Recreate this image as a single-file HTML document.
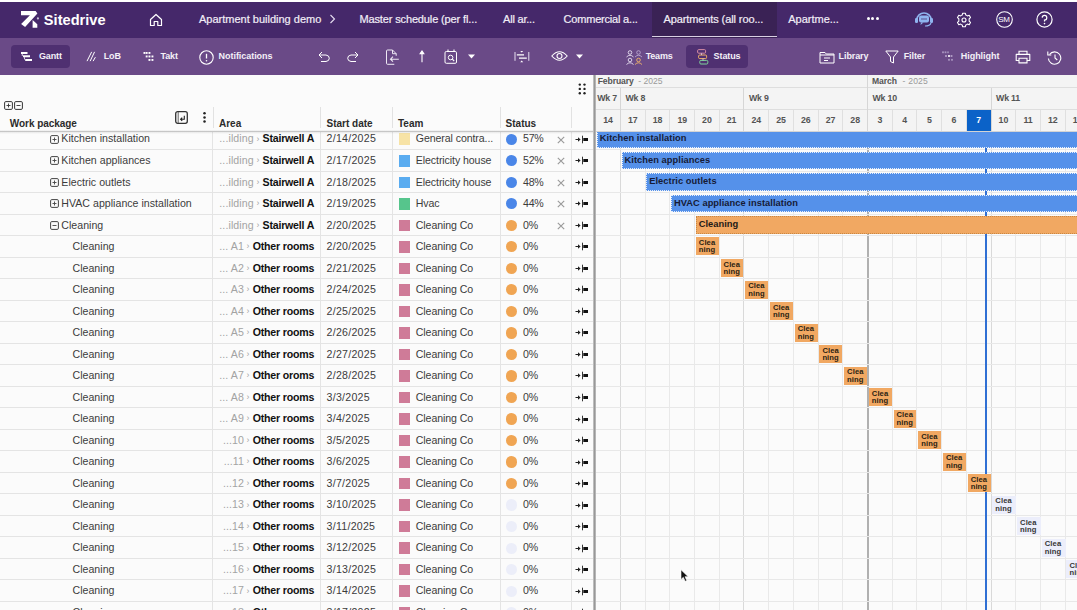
<!DOCTYPE html>
<html><head><meta charset="utf-8"><style>
html,body{margin:0;padding:0;width:1077px;height:610px;overflow:hidden;background:#fff}
body{position:relative;font-family:"Liberation Sans",sans-serif}
.t{position:absolute;white-space:nowrap}
.b{position:absolute;display:block}
.bar{position:absolute;box-sizing:border-box;border:1px dotted rgba(255,255,255,0.85);border-right:none;font-weight:700;font-size:9.3px;line-height:15.72px;padding-left:2px;white-space:nowrap;overflow:hidden;letter-spacing:0.05px}
.sb{position:absolute;box-sizing:border-box;font-weight:700;font-size:7.6px;line-height:7.4px;padding:1.6px 0 0 3px;white-space:nowrap;overflow:hidden;letter-spacing:0.1px}
</style></head><body>
<div class="b" style="left:0.00px;top:0.00px;width:1077.00px;height:2.00px;background:#fff"></div>
<div class="b" style="left:0.00px;top:2.00px;width:1077.00px;height:35.50px;background:#45286a"></div>
<div class="b" style="left:652.00px;top:2.00px;width:125.00px;height:35.50px;background:#3a2255"></div>
<div class="b" style="left:652.00px;top:35.60px;width:125.00px;height:1.60px;background:#d9d0e3"></div>
<svg class="b" style="left:20.00px;top:10.00px;" width="20" height="19" viewBox="0 0 20 19"><path d="M1 1.1H15.6L17.4 3.4L5.1 16.9L1.1 13.9L9.9 5.2H1Z" fill="#fff"/><path d="M12.6 9.9L17.3 14.2V17.8H12.6Z" fill="#fff"/><circle cx="17.9" cy="8.4" r="1.1" fill="#c9bfd8"/></svg>
<div class="t" style="left:43.80px;top:12.94px;font-size:14.6px;line-height:14.6px;color:#fff;font-weight:700;letter-spacing:0.02px">Sitedrive</div>
<svg class="b" style="left:149.00px;top:12.50px;" width="14" height="14" viewBox="0 0 14 14"><path d="M1.5 6.5L7 1.5L12.5 6.5V12.5H8.8V8.5H5.2V12.5H1.5Z" fill="none" stroke="#fff" stroke-width="1.2" stroke-linejoin="round"/></svg>
<div class="t" style="left:199.00px;top:13.89px;font-size:11px;line-height:11px;color:#f2eef7;-webkit-text-stroke:0.2px #f2eef7;font-weight:400;">Apartment building demo</div>
<svg class="b" style="left:329.00px;top:14.00px;" width="7" height="10" viewBox="0 0 7 10"><path d="M1.5 1L5.5 5L1.5 9" fill="none" stroke="#e6def0" stroke-width="1.1"/></svg>
<div class="t" style="left:359.40px;top:13.89px;font-size:11px;line-height:11px;color:#f2eef7;-webkit-text-stroke:0.2px #f2eef7;font-weight:400;letter-spacing:-0.13px">Master schedule (per fl...</div>
<div class="t" style="left:503.00px;top:13.89px;font-size:11px;line-height:11px;color:#f2eef7;-webkit-text-stroke:0.2px #f2eef7;font-weight:400;letter-spacing:-0.2px">All ar...</div>
<div class="t" style="left:563.60px;top:13.89px;font-size:11px;line-height:11px;color:#f2eef7;-webkit-text-stroke:0.2px #f2eef7;font-weight:400;letter-spacing:-0.2px">Commercial a...</div>
<div class="t" style="left:663.40px;top:13.89px;font-size:11px;line-height:11px;color:#f2eef7;-webkit-text-stroke:0.2px #f2eef7;font-weight:400;letter-spacing:-0.1px">Apartments (all roo...</div>
<div class="t" style="left:788.20px;top:13.89px;font-size:11px;line-height:11px;color:#f2eef7;-webkit-text-stroke:0.2px #f2eef7;font-weight:400;">Apartme...</div>
<div class="b" style="left:866.50px;top:17.30px;width:3.20px;height:3.20px;background:#fff;border-radius:50%"></div>
<div class="b" style="left:871.10px;top:17.30px;width:3.20px;height:3.20px;background:#fff;border-radius:50%"></div>
<div class="b" style="left:875.70px;top:17.30px;width:3.20px;height:3.20px;background:#fff;border-radius:50%"></div>
<svg class="b" style="left:914.00px;top:11.00px;" width="20" height="16" viewBox="0 0 20 16"><path d="M3 8.5A7 6.5 0 0 1 17 8.5" fill="none" stroke="#8fb4ef" stroke-width="1.6"/><rect x="1" y="7" width="3" height="5" rx="1.2" fill="#8fb4ef"/><rect x="16" y="7" width="3" height="5" rx="1.2" fill="#8fb4ef"/><rect x="5" y="4.5" width="10" height="7" rx="2" fill="#8fb4ef"/><path d="M7 11.5L6.5 14L9.5 11.5Z" fill="#8fb4ef"/><circle cx="8" cy="8" r="0.7" fill="#472a6b"/><circle cx="10" cy="8" r="0.7" fill="#472a6b"/><circle cx="12" cy="8" r="0.7" fill="#472a6b"/><path d="M17 12Q16 15 11 15" fill="none" stroke="#8fb4ef" stroke-width="1.2"/></svg>
<svg class="b" style="left:956.00px;top:11.50px;" width="16" height="16" viewBox="0 0 16 16"><g transform="translate(8 8)" fill="none" stroke="#fff" stroke-width="1.1"><path d="M-1.3 -6.8H1.3L1.8 -5A5 5 0 0 1 3.4 -4.1L5.2 -4.7L6.5 -2.4L5.1 -1.1A5 5 0 0 1 5.1 1.1L6.5 2.4L5.2 4.7L3.4 4.1A5 5 0 0 1 1.8 5L1.3 6.8H-1.3L-1.8 5A5 5 0 0 1 -3.4 4.1L-5.2 4.7L-6.5 2.4L-5.1 1.1A5 5 0 0 1 -5.1 -1.1L-6.5 -2.4L-5.2 -4.7L-3.4 -4.1A5 5 0 0 1 -1.8 -5Z" stroke-linejoin="round"/><circle r="2"/></g></svg>
<svg class="b" style="left:995.50px;top:11.00px;" width="17" height="17" viewBox="0 0 17 17"><circle cx="8.5" cy="8.5" r="7.8" fill="none" stroke="#fff" stroke-width="1.1"/></svg>
<div class="t" style="left:954.00px;width:100px;text-align:center;top:15.73px;font-size:8px;line-height:8px;color:#fff;font-weight:400;letter-spacing:-0.3px">SM</div>
<svg class="b" style="left:1036.00px;top:11.00px;" width="17" height="17" viewBox="0 0 17 17"><circle cx="8.5" cy="8.5" r="7.6" fill="none" stroke="#fff" stroke-width="1.2"/><path d="M6.2 6.6A2.3 2.3 0 1 1 8.5 9V10.6" fill="none" stroke="#fff" stroke-width="1.2"/><circle cx="8.5" cy="12.6" r="0.8" fill="#fff"/></svg>
<div class="b" style="left:0.00px;top:37.50px;width:1077.00px;height:37.00px;background:#6a4a87"></div>
<div class="b" style="left:10.80px;top:44.70px;width:59.20px;height:23.00px;background:#4f3071;border-radius:4px"></div>
<div class="b" style="left:686.00px;top:45.00px;width:62.00px;height:22.70px;background:#4f3071;border-radius:4px"></div>
<svg class="b" style="left:20.00px;top:51.00px;" width="13" height="11" viewBox="0 0 13 11"><path d="M1 2H7.5M3 5.2H10M5.2 8.9H12" stroke="#fff" stroke-width="2"/><path d="M2.3 3V5M4.5 6.2V8.5" stroke="#fff" stroke-width="0.8"/></svg>
<div class="t" style="left:39.00px;top:51.98px;font-size:9px;line-height:9px;color:#f4f0f8;font-weight:700;letter-spacing:-0.15px">Gantt</div>
<svg class="b" style="left:86.00px;top:51.00px;" width="11" height="11" viewBox="0 0 11 11"><path d="M5.5 1.2L1.2 9.8M8.4 1.2L4.3 9.8M9.2 6.5L7.3 9.8" stroke="#fff" stroke-width="1" stroke-linecap="round"/></svg>
<div class="t" style="left:103.70px;top:51.98px;font-size:9px;line-height:9px;color:#f4f0f8;font-weight:700;letter-spacing:-0.15px">LoB</div>
<svg class="b" style="left:141.50px;top:51.00px;" width="12" height="11" viewBox="0 0 12 11"><rect x="1.5" y="1" width="1.9" height="1.9" fill="#fff"/><rect x="3.7" y="1" width="1.9" height="1.9" fill="#fff"/><rect x="6.5" y="1" width="1.9" height="1.9" fill="#fff"/><rect x="3.7" y="4.5" width="1.9" height="1.9" fill="#fff"/><rect x="6.5" y="4.5" width="1.9" height="1.9" fill="#fff"/><rect x="9.5" y="4.5" width="1.9" height="1.9" fill="#fff"/><rect x="6.5" y="8" width="1.9" height="1.9" fill="#fff"/><rect x="9.5" y="8" width="1.9" height="1.9" fill="#fff"/></svg>
<div class="t" style="left:160.50px;top:51.98px;font-size:9px;line-height:9px;color:#f4f0f8;font-weight:700;letter-spacing:-0.15px">Takt</div>
<svg class="b" style="left:198.50px;top:49.50px;" width="15" height="15" viewBox="0 0 15 15"><circle cx="7.5" cy="7.5" r="6.7" fill="none" stroke="#fff" stroke-width="1.1"/><path d="M7.5 3.8V8.5" stroke="#fff" stroke-width="1.3"/><circle cx="7.5" cy="10.8" r="0.8" fill="#fff"/></svg>
<div class="t" style="left:218.60px;top:51.98px;font-size:9px;line-height:9px;color:#f4f0f8;font-weight:700;letter-spacing:-0.05px">Notifications</div>
<svg class="b" style="left:317.50px;top:51.00px;" width="13" height="11" viewBox="0 0 13 11"><path d="M4 1L1 4L4 7M1 4H8A4 3.3 0 0 1 8 10.5H3" fill="none" stroke="#fff" stroke-width="1"/></svg>
<svg class="b" style="left:345.50px;top:51.00px;" width="13" height="11" viewBox="0 0 13 11"><path d="M9 1L12 4L9 7M12 4H5A4 3.3 0 0 0 5 10.5H10" fill="none" stroke="#fff" stroke-width="1"/></svg>
<svg class="b" style="left:385.00px;top:48.50px;" width="15" height="16" viewBox="0 0 15 16"><path d="M7.5 1H2.5A1 1 0 0 0 1.5 2V14.3A1 1 0 0 0 2.5 15.3H9.3M7.5 1L11.2 4.7V6.8M7.5 1V4.7H11.2" fill="none" stroke="#eee8f4" stroke-width="1"/><path d="M13.8 10.2H5.5M8 7.7L5.5 10.2L8 12.7" fill="none" stroke="#eee8f4" stroke-width="1.1"/></svg>
<svg class="b" style="left:418.80px;top:50.00px;" width="6" height="13" viewBox="0 0 6 13"><path d="M3 12.3V3M1.2 3.6L3 1L4.8 3.6Z" stroke="#fff" stroke-width="1.1" fill="#fff"/></svg>
<svg class="b" style="left:443.50px;top:49.00px;" width="14" height="16" viewBox="0 0 14 16"><rect x="1" y="2.5" width="11.5" height="11.8" rx="1.3" fill="none" stroke="#fff" stroke-width="1"/><path d="M4 0.5V3M10 0.5V3" stroke="#fff" stroke-width="1.1"/><circle cx="6.6" cy="8.5" r="2.3" fill="none" stroke="#fff" stroke-width="1"/><path d="M8.3 10.2L10.2 12" stroke="#fff" stroke-width="1.1"/></svg>
<svg class="b" style="left:467.50px;top:54.00px;" width="7" height="5" viewBox="0 0 7 5"><path d="M0 0.5H7L3.5 4.5Z" fill="#fff"/></svg>
<svg class="b" style="left:512.50px;top:49.50px;" width="17" height="14" viewBox="0 0 17 14"><path d="M2 2V10.8M15.8 2V10.8" stroke="#e6def0" stroke-width="1"/><path d="M3.8 4.9H11M6 8.1H13.8" stroke="#fff" stroke-width="1.3"/><path d="M7.2 1H10.2L8.7 2.6Z M7.2 12.2H10.2L8.7 10.6Z" fill="#fff"/></svg>
<svg class="b" style="left:550.80px;top:50.00px;" width="17" height="12" viewBox="0 0 17 12"><path d="M0.8 6Q8.5 -2.5 16.2 6Q8.5 14.5 0.8 6Z" fill="none" stroke="#fff" stroke-width="1.1"/><circle cx="8.5" cy="6" r="2.5" fill="none" stroke="#fff" stroke-width="1.1"/></svg>
<svg class="b" style="left:576.00px;top:54.00px;" width="7" height="5" viewBox="0 0 7 5"><path d="M0 0.5H7L3.5 4.5Z" fill="#fff"/></svg>
<svg class="b" style="left:625.50px;top:49.50px;" width="17" height="16" viewBox="0 0 17 16"><g fill="none" stroke-width="0.9"><circle cx="4" cy="2.5" r="1.8" stroke="#e8e0f0"/><path d="M0.5 7Q4 3.5 7.5 7" stroke="#e8e0f0"/><circle cx="12.5" cy="2.5" r="1.8" stroke="#b9a6cf"/><path d="M9 7Q12.5 3.5 16 7" stroke="#b9a6cf"/><circle cx="4" cy="10" r="1.8" stroke="#e8e0f0"/><path d="M0.5 14.5Q4 11 7.5 14.5" stroke="#e8e0f0"/><circle cx="12.5" cy="10" r="1.8" stroke="#f1b46a"/><path d="M9 14.5Q12.5 11 16 14.5" stroke="#f1b46a"/></g></svg>
<div class="t" style="left:645.70px;top:51.98px;font-size:9px;line-height:9px;color:#f4f0f8;font-weight:700;letter-spacing:-0.2px">Teams</div>
<svg class="b" style="left:697.00px;top:49.00px;" width="12" height="16" viewBox="0 0 12 16"><rect x="0.6" y="0.6" width="8" height="3.6" rx="1.1" fill="none" stroke="#d58ca4" stroke-width="1"/><rect x="1.6" y="6" width="8" height="3.6" rx="1.1" fill="none" stroke="#f1b46a" stroke-width="1"/><rect x="2.8" y="11.4" width="8" height="3.6" rx="1.1" fill="none" stroke="#7fd39b" stroke-width="1"/><path d="M4.5 4.2V6M6 9.6V11.4" stroke="#d9cfe6" stroke-width="0.8"/></svg>
<div class="t" style="left:713.60px;top:51.98px;font-size:9px;line-height:9px;color:#f4f0f8;font-weight:700;letter-spacing:-0.1px">Status</div>
<svg class="b" style="left:818.50px;top:50.50px;" width="16" height="13" viewBox="0 0 16 13"><path d="M1 1.5H6L7.3 3H15V12H1Z" fill="none" stroke="#fff" stroke-width="1"/><path d="M1 4H15" stroke="#fff" stroke-width="1"/><path d="M5 7H11M5 9.5H9" stroke="#fff" stroke-width="1"/></svg>
<div class="t" style="left:838.60px;top:51.98px;font-size:9px;line-height:9px;color:#f4f0f8;font-weight:700;letter-spacing:-0.1px">Library</div>
<svg class="b" style="left:884.50px;top:49.80px;" width="14" height="14" viewBox="0 0 14 14"><path d="M0.8 1H13.2L8.5 7V13L5.5 11.5V7Z" fill="none" stroke="#fff" stroke-width="1" stroke-linejoin="round"/></svg>
<div class="t" style="left:903.70px;top:51.98px;font-size:9px;line-height:9px;color:#f4f0f8;font-weight:700;letter-spacing:-0.1px">Filter</div>
<svg class="b" style="left:942.00px;top:51.00px;" width="12" height="11" viewBox="0 0 12 11"><rect x="0.09999999999999998" y="0.4" width="1.8" height="1.8" fill="#a995c0"/><rect x="2.6" y="0.4" width="1.8" height="1.8" fill="#a995c0"/><rect x="5.1" y="0.4" width="1.8" height="1.8" fill="#9d88b6"/><rect x="3.1" y="4.1" width="1.8" height="1.8" fill="#b5a3c9"/><rect x="6.1" y="4.1" width="1.8" height="1.8" fill="#ffffff"/><rect x="8.6" y="4.1" width="1.8" height="1.8" fill="#b5a3c9"/><rect x="6.1" y="7.9" width="1.8" height="1.8" fill="#a995c0"/><rect x="9.1" y="7.9" width="1.8" height="1.8" fill="#a995c0"/></svg>
<div class="t" style="left:960.80px;top:51.98px;font-size:9px;line-height:9px;color:#f4f0f8;font-weight:700;letter-spacing:-0.05px">Highlight</div>
<svg class="b" style="left:1015.00px;top:50.00px;" width="16" height="14" viewBox="0 0 16 14"><path d="M4 4.2V1.2H12V4.2" fill="none" stroke="#fff" stroke-width="1.1"/><path d="M4 10.5H1.2V4.4H14.8V10.5H12" fill="none" stroke="#fff" stroke-width="1.1" stroke-linejoin="round"/><path d="M4 8.3V12.9H12V8.3Z" fill="none" stroke="#fff" stroke-width="1.1"/></svg>
<svg class="b" style="left:1047.00px;top:49.50px;" width="15" height="15" viewBox="0 0 15 15"><path d="M2.5 4.5A6.2 6.2 0 1 1 1.4 8.5" fill="none" stroke="#fff" stroke-width="1.1"/><path d="M0.8 1.5V5H4.3" fill="none" stroke="#fff" stroke-width="1.1"/><path d="M8 4.5V8L10.3 10" fill="none" stroke="#fff" stroke-width="1.1"/></svg>
<div class="b" style="left:0.00px;top:74.50px;width:1077.00px;height:535.50px;background:#fbfbfb"></div>
<div class="b" style="left:619.91px;top:130.50px;width:1.00px;height:479.50px;background:#d9d9d9"></div>
<div class="b" style="left:644.62px;top:130.50px;width:1.00px;height:479.50px;background:#e9e9e9"></div>
<div class="b" style="left:669.33px;top:130.50px;width:1.00px;height:479.50px;background:#e9e9e9"></div>
<div class="b" style="left:694.04px;top:130.50px;width:1.00px;height:479.50px;background:#e9e9e9"></div>
<div class="b" style="left:718.75px;top:130.50px;width:1.00px;height:479.50px;background:#e9e9e9"></div>
<div class="b" style="left:743.46px;top:130.50px;width:1.00px;height:479.50px;background:#d9d9d9"></div>
<div class="b" style="left:768.17px;top:130.50px;width:1.00px;height:479.50px;background:#e9e9e9"></div>
<div class="b" style="left:792.88px;top:130.50px;width:1.00px;height:479.50px;background:#e9e9e9"></div>
<div class="b" style="left:817.59px;top:130.50px;width:1.00px;height:479.50px;background:#e9e9e9"></div>
<div class="b" style="left:842.30px;top:130.50px;width:1.00px;height:479.50px;background:#e9e9e9"></div>
<div class="b" style="left:866.51px;top:130.50px;width:2.00px;height:479.50px;background:#b0b0b0"></div>
<div class="b" style="left:891.72px;top:130.50px;width:1.00px;height:479.50px;background:#e9e9e9"></div>
<div class="b" style="left:916.43px;top:130.50px;width:1.00px;height:479.50px;background:#e9e9e9"></div>
<div class="b" style="left:941.14px;top:130.50px;width:1.00px;height:479.50px;background:#e9e9e9"></div>
<div class="b" style="left:965.85px;top:130.50px;width:1.00px;height:479.50px;background:#e9e9e9"></div>
<div class="b" style="left:990.56px;top:130.50px;width:1.00px;height:479.50px;background:#d9d9d9"></div>
<div class="b" style="left:1015.27px;top:130.50px;width:1.00px;height:479.50px;background:#e9e9e9"></div>
<div class="b" style="left:1039.98px;top:130.50px;width:1.00px;height:479.50px;background:#e9e9e9"></div>
<div class="b" style="left:1064.69px;top:130.50px;width:1.00px;height:479.50px;background:#e9e9e9"></div>
<div class="b" style="left:1089.40px;top:130.50px;width:1.00px;height:479.50px;background:#e9e9e9"></div>
<div class="b" style="left:595.70px;top:149.00px;width:481.30px;height:1.00px;background:#e8e8e8"></div>
<div class="b" style="left:595.70px;top:170.52px;width:481.30px;height:1.00px;background:#e8e8e8"></div>
<div class="b" style="left:595.70px;top:192.04px;width:481.30px;height:1.00px;background:#e8e8e8"></div>
<div class="b" style="left:595.70px;top:213.56px;width:481.30px;height:1.00px;background:#e8e8e8"></div>
<div class="b" style="left:595.70px;top:235.08px;width:481.30px;height:1.00px;background:#e8e8e8"></div>
<div class="b" style="left:595.70px;top:256.60px;width:481.30px;height:1.00px;background:#e8e8e8"></div>
<div class="b" style="left:595.70px;top:278.12px;width:481.30px;height:1.00px;background:#e8e8e8"></div>
<div class="b" style="left:595.70px;top:299.64px;width:481.30px;height:1.00px;background:#e8e8e8"></div>
<div class="b" style="left:595.70px;top:321.16px;width:481.30px;height:1.00px;background:#e8e8e8"></div>
<div class="b" style="left:595.70px;top:342.68px;width:481.30px;height:1.00px;background:#e8e8e8"></div>
<div class="b" style="left:595.70px;top:364.20px;width:481.30px;height:1.00px;background:#e8e8e8"></div>
<div class="b" style="left:595.70px;top:385.72px;width:481.30px;height:1.00px;background:#e8e8e8"></div>
<div class="b" style="left:595.70px;top:407.24px;width:481.30px;height:1.00px;background:#e8e8e8"></div>
<div class="b" style="left:595.70px;top:428.76px;width:481.30px;height:1.00px;background:#e8e8e8"></div>
<div class="b" style="left:595.70px;top:450.28px;width:481.30px;height:1.00px;background:#e8e8e8"></div>
<div class="b" style="left:595.70px;top:471.80px;width:481.30px;height:1.00px;background:#e8e8e8"></div>
<div class="b" style="left:595.70px;top:493.32px;width:481.30px;height:1.00px;background:#e8e8e8"></div>
<div class="b" style="left:595.70px;top:514.84px;width:481.30px;height:1.00px;background:#e8e8e8"></div>
<div class="b" style="left:595.70px;top:536.36px;width:481.30px;height:1.00px;background:#e8e8e8"></div>
<div class="b" style="left:595.70px;top:557.88px;width:481.30px;height:1.00px;background:#e8e8e8"></div>
<div class="b" style="left:595.70px;top:579.40px;width:481.30px;height:1.00px;background:#e8e8e8"></div>
<div class="b" style="left:595.70px;top:600.92px;width:481.30px;height:1.00px;background:#e8e8e8"></div>
<div class="b" style="left:985.45px;top:130.50px;width:2.00px;height:479.50px;background:#3070d4"></div>
<div class="bar" style="left:596.80px;top:130.28px;width:490.20px;height:17.62px;background:#5591ea;color:#161b36;border-color:rgba(255,255,255,0.85)">Kitchen installation</div>
<div class="bar" style="left:621.51px;top:151.80px;width:465.49px;height:17.62px;background:#5591ea;color:#161b36;border-color:rgba(255,255,255,0.85)">Kitchen appliances</div>
<div class="bar" style="left:646.22px;top:173.32px;width:440.78px;height:17.62px;background:#5591ea;color:#161b36;border-color:rgba(255,255,255,0.85)">Electric outlets</div>
<div class="bar" style="left:670.93px;top:194.84px;width:416.07px;height:17.62px;background:#5591ea;color:#161b36;border-color:rgba(255,255,255,0.85)">HVAC appliance installation</div>
<div class="bar" style="left:695.64px;top:216.36px;width:391.36px;height:17.62px;background:#f1a862;color:#1e1a16;border-color:#c98743">Cleaning</div>
<div class="sb" style="left:695.84px;top:237.48px;width:22.91px;height:18.02px;background:#f1a862;color:#2a1e12">Clea<br>ning</div>
<div class="sb" style="left:720.55px;top:259.00px;width:22.91px;height:18.02px;background:#f1a862;color:#2a1e12">Clea<br>ning</div>
<div class="sb" style="left:745.26px;top:280.52px;width:22.91px;height:18.02px;background:#f1a862;color:#2a1e12">Clea<br>ning</div>
<div class="sb" style="left:769.97px;top:302.04px;width:22.91px;height:18.02px;background:#f1a862;color:#2a1e12">Clea<br>ning</div>
<div class="sb" style="left:794.68px;top:323.56px;width:22.91px;height:18.02px;background:#f1a862;color:#2a1e12">Clea<br>ning</div>
<div class="sb" style="left:819.39px;top:345.08px;width:22.91px;height:18.02px;background:#f1a862;color:#2a1e12">Clea<br>ning</div>
<div class="sb" style="left:844.10px;top:366.60px;width:22.91px;height:18.02px;background:#f1a862;color:#2a1e12">Clea<br>ning</div>
<div class="sb" style="left:868.81px;top:388.12px;width:22.91px;height:18.02px;background:#f1a862;color:#2a1e12">Clea<br>ning</div>
<div class="sb" style="left:893.52px;top:409.64px;width:22.91px;height:18.02px;background:#f1a862;color:#2a1e12">Clea<br>ning</div>
<div class="sb" style="left:918.23px;top:431.16px;width:22.91px;height:18.02px;background:#f1a862;color:#2a1e12">Clea<br>ning</div>
<div class="sb" style="left:942.94px;top:452.68px;width:22.91px;height:18.02px;background:#f1a862;color:#2a1e12">Clea<br>ning</div>
<div class="sb" style="left:967.65px;top:474.20px;width:22.91px;height:18.02px;background:#f1a862;color:#2a1e12">Clea<br>ning</div>
<div class="sb" style="left:992.36px;top:495.72px;width:23.81px;height:18.02px;background:#eceefb;color:#363636">Clea<br>ning</div>
<div class="sb" style="left:1017.07px;top:517.24px;width:23.81px;height:18.02px;background:#eceefb;color:#363636">Clea<br>ning</div>
<div class="sb" style="left:1041.78px;top:538.76px;width:23.81px;height:18.02px;background:#eceefb;color:#363636">Clea<br>ning</div>
<div class="sb" style="left:1066.49px;top:560.28px;width:23.81px;height:18.02px;background:#eceefb;color:#363636">Clea<br>ning</div>
<div class="b" style="left:595.70px;top:74.50px;width:481.30px;height:57.10px;background:#f4f4f4"></div>
<div class="b" style="left:595.70px;top:87.30px;width:481.30px;height:1.00px;background:#dedede"></div>
<div class="b" style="left:595.70px;top:108.90px;width:481.30px;height:1.00px;background:#dedede"></div>
<div class="b" style="left:595.70px;top:131.00px;width:481.30px;height:1.00px;background:#d4d4d4"></div>
<div class="b" style="left:619.91px;top:88.30px;width:1.00px;height:42.70px;background:#d6d6d6"></div>
<div class="b" style="left:644.62px;top:109.90px;width:1.00px;height:21.10px;background:#e0e0e0"></div>
<div class="b" style="left:669.33px;top:109.90px;width:1.00px;height:21.10px;background:#e0e0e0"></div>
<div class="b" style="left:694.04px;top:109.90px;width:1.00px;height:21.10px;background:#e0e0e0"></div>
<div class="b" style="left:718.75px;top:109.90px;width:1.00px;height:21.10px;background:#e0e0e0"></div>
<div class="b" style="left:743.46px;top:88.30px;width:1.00px;height:42.70px;background:#d6d6d6"></div>
<div class="b" style="left:768.17px;top:109.90px;width:1.00px;height:21.10px;background:#e0e0e0"></div>
<div class="b" style="left:792.88px;top:109.90px;width:1.00px;height:21.10px;background:#e0e0e0"></div>
<div class="b" style="left:817.59px;top:109.90px;width:1.00px;height:21.10px;background:#e0e0e0"></div>
<div class="b" style="left:842.30px;top:109.90px;width:1.00px;height:21.10px;background:#e0e0e0"></div>
<div class="b" style="left:867.01px;top:74.50px;width:1.00px;height:56.50px;background:#d6d6d6"></div>
<div class="b" style="left:891.72px;top:109.90px;width:1.00px;height:21.10px;background:#e0e0e0"></div>
<div class="b" style="left:916.43px;top:109.90px;width:1.00px;height:21.10px;background:#e0e0e0"></div>
<div class="b" style="left:941.14px;top:109.90px;width:1.00px;height:21.10px;background:#e0e0e0"></div>
<div class="b" style="left:965.85px;top:109.90px;width:1.00px;height:21.10px;background:#e0e0e0"></div>
<div class="b" style="left:990.56px;top:88.30px;width:1.00px;height:42.70px;background:#d6d6d6"></div>
<div class="b" style="left:1015.27px;top:109.90px;width:1.00px;height:21.10px;background:#e0e0e0"></div>
<div class="b" style="left:1039.98px;top:109.90px;width:1.00px;height:21.10px;background:#e0e0e0"></div>
<div class="b" style="left:1064.69px;top:109.90px;width:1.00px;height:21.10px;background:#e0e0e0"></div>
<div class="b" style="left:1089.40px;top:109.90px;width:1.00px;height:21.10px;background:#e0e0e0"></div>
<div class="b" style="left:966.95px;top:109.70px;width:24.11px;height:21.50px;background:#0b62c8"></div>
<div class="t" style="left:597.70px;top:77.42px;font-size:8.6px;line-height:8.6px;color:#555;font-weight:700;letter-spacing:-0.1px">February</div>
<div class="t" style="left:638.20px;top:77.42px;font-size:8.6px;line-height:8.6px;color:#9a9a9a;font-weight:400;">- 2025</div>
<div class="t" style="left:872.01px;top:77.42px;font-size:8.6px;line-height:8.6px;color:#555;font-weight:700;letter-spacing:-0.1px">March</div>
<div class="t" style="left:902.51px;top:77.42px;font-size:8.6px;line-height:8.6px;color:#9a9a9a;font-weight:400;letter-spacing:0.2px">- 2025</div>
<div class="t" style="left:597.20px;top:94.15px;font-size:8.8px;line-height:8.8px;color:#555;font-weight:700;letter-spacing:-0.2px">Wk 7</div>
<div class="t" style="left:625.41px;top:94.15px;font-size:8.8px;line-height:8.8px;color:#555;font-weight:700;letter-spacing:-0.2px">Wk 8</div>
<div class="t" style="left:748.96px;top:94.15px;font-size:8.8px;line-height:8.8px;color:#555;font-weight:700;letter-spacing:-0.2px">Wk 9</div>
<div class="t" style="left:872.51px;top:94.15px;font-size:8.8px;line-height:8.8px;color:#555;font-weight:700;letter-spacing:-0.2px">Wk 10</div>
<div class="t" style="left:996.06px;top:94.15px;font-size:8.8px;line-height:8.8px;color:#555;font-weight:700;letter-spacing:-0.2px">Wk 11</div>
<div class="t" style="left:558.06px;width:100px;text-align:center;top:115.55px;font-size:8.8px;line-height:8.8px;color:#545454;font-weight:700;letter-spacing:-0.1px">14</div>
<div class="t" style="left:582.77px;width:100px;text-align:center;top:115.55px;font-size:8.8px;line-height:8.8px;color:#545454;font-weight:700;letter-spacing:-0.1px">17</div>
<div class="t" style="left:607.48px;width:100px;text-align:center;top:115.55px;font-size:8.8px;line-height:8.8px;color:#545454;font-weight:700;letter-spacing:-0.1px">18</div>
<div class="t" style="left:632.19px;width:100px;text-align:center;top:115.55px;font-size:8.8px;line-height:8.8px;color:#545454;font-weight:700;letter-spacing:-0.1px">19</div>
<div class="t" style="left:656.90px;width:100px;text-align:center;top:115.55px;font-size:8.8px;line-height:8.8px;color:#545454;font-weight:700;letter-spacing:-0.1px">20</div>
<div class="t" style="left:681.61px;width:100px;text-align:center;top:115.55px;font-size:8.8px;line-height:8.8px;color:#545454;font-weight:700;letter-spacing:-0.1px">21</div>
<div class="t" style="left:706.32px;width:100px;text-align:center;top:115.55px;font-size:8.8px;line-height:8.8px;color:#545454;font-weight:700;letter-spacing:-0.1px">24</div>
<div class="t" style="left:731.03px;width:100px;text-align:center;top:115.55px;font-size:8.8px;line-height:8.8px;color:#545454;font-weight:700;letter-spacing:-0.1px">25</div>
<div class="t" style="left:755.74px;width:100px;text-align:center;top:115.55px;font-size:8.8px;line-height:8.8px;color:#545454;font-weight:700;letter-spacing:-0.1px">26</div>
<div class="t" style="left:780.45px;width:100px;text-align:center;top:115.55px;font-size:8.8px;line-height:8.8px;color:#545454;font-weight:700;letter-spacing:-0.1px">27</div>
<div class="t" style="left:805.16px;width:100px;text-align:center;top:115.55px;font-size:8.8px;line-height:8.8px;color:#545454;font-weight:700;letter-spacing:-0.1px">28</div>
<div class="t" style="left:829.87px;width:100px;text-align:center;top:115.55px;font-size:8.8px;line-height:8.8px;color:#545454;font-weight:700;letter-spacing:-0.1px">3</div>
<div class="t" style="left:854.58px;width:100px;text-align:center;top:115.55px;font-size:8.8px;line-height:8.8px;color:#545454;font-weight:700;letter-spacing:-0.1px">4</div>
<div class="t" style="left:879.29px;width:100px;text-align:center;top:115.55px;font-size:8.8px;line-height:8.8px;color:#545454;font-weight:700;letter-spacing:-0.1px">5</div>
<div class="t" style="left:904.00px;width:100px;text-align:center;top:115.55px;font-size:8.8px;line-height:8.8px;color:#545454;font-weight:700;letter-spacing:-0.1px">6</div>
<div class="t" style="left:928.71px;width:100px;text-align:center;top:115.55px;font-size:8.8px;line-height:8.8px;color:#fff;font-weight:700;letter-spacing:-0.1px">7</div>
<div class="t" style="left:953.42px;width:100px;text-align:center;top:115.55px;font-size:8.8px;line-height:8.8px;color:#545454;font-weight:700;letter-spacing:-0.1px">10</div>
<div class="t" style="left:978.12px;width:100px;text-align:center;top:115.55px;font-size:8.8px;line-height:8.8px;color:#545454;font-weight:700;letter-spacing:-0.1px">11</div>
<div class="t" style="left:1002.84px;width:100px;text-align:center;top:115.55px;font-size:8.8px;line-height:8.8px;color:#545454;font-weight:700;letter-spacing:-0.1px">12</div>
<div class="t" style="left:1027.55px;width:100px;text-align:center;top:115.55px;font-size:8.8px;line-height:8.8px;color:#545454;font-weight:700;letter-spacing:-0.1px">13</div>
<div class="t" style="left:1052.26px;width:100px;text-align:center;top:115.55px;font-size:8.8px;line-height:8.8px;color:#545454;font-weight:700;letter-spacing:-0.1px">14</div>
<svg class="b" style="left:680.00px;top:569.00px;" width="9" height="13" viewBox="0 0 9 13"><path d="M1 0.8V10.5L3.3 8.3L5.2 12.3L6.8 11.6L5 7.7H8.2Z" fill="#111" stroke="#fff" stroke-width="0.6"/></svg>
<div class="b" style="left:592.90px;top:74.50px;width:2.90px;height:535.50px;background:linear-gradient(90deg,#cfcfcf,#989898 50%,#c4c4c4)"></div>
<svg class="b" style="left:49.70px;top:134.84px;" width="9" height="9" viewBox="0 0 9 9"><rect x="0.6" y="0.6" width="7.8" height="7.8" rx="1.2" fill="none" stroke="#444" stroke-width="1"/><path d="M2.5 4.5H6.5" stroke="#444" stroke-width="0.9"/><path d="M4.5 2.5V6.5" stroke="#444" stroke-width="0.9"/></svg>
<div class="t" style="left:61.30px;top:133.47px;font-size:10.6px;line-height:10.6px;color:#3b3b3b;font-weight:400;letter-spacing:0.02px">Kitchen installation</div>
<div class="t" style="right:762.90px;top:133.47px;font-size:10.6px;line-height:10.6px;white-space:nowrap"><span style="color:#a3a3a3;letter-spacing:0.1px">...ilding</span><span style="color:#a3a3a3;font-size:8.5px;position:relative;top:-0.8px;margin:0 3.3px 0 2.6px">&#8250;</span><span style="color:#111;font-weight:700;letter-spacing:-0.2px">Stairwell A</span></div>
<div class="t" style="left:326.50px;top:133.47px;font-size:10.6px;line-height:10.6px;color:#3b3b3b;font-weight:400;letter-spacing:0.27px">2/14/2025</div>
<div class="b" style="left:398.60px;top:133.49px;width:11.50px;height:11.50px;background:#f7e3a6"></div>
<div class="t" style="left:415.80px;top:133.47px;font-size:10.6px;line-height:10.6px;color:#3b3b3b;font-weight:400;letter-spacing:-0.09px">General contra...</div>
<div class="b" style="left:506.00px;top:133.64px;width:11.20px;height:11.20px;background:#4a86e8;border-radius:50%"></div>
<div class="t" style="left:523.00px;top:133.47px;font-size:10.6px;line-height:10.6px;color:#3b3b3b;font-weight:400;letter-spacing:-0.25px">57%</div>
<svg class="b" style="left:556.50px;top:135.74px;" width="8" height="8" viewBox="0 0 8 8"><path d="M0.8 0.8L7.2 7.2M7.2 0.8L0.8 7.2" stroke="#9a9a9a" stroke-width="1.15"/></svg>
<svg class="b" style="left:575.00px;top:134.74px;" width="14" height="9" viewBox="0 0 14 9"><path d="M0.5 4.5H3.5" stroke="#222" stroke-width="1"/><path d="M3 2.3L5.6 4.5L3 6.7Z" fill="#222"/><path d="M7.5 0.7V8.3" stroke="#333" stroke-width="1"/><rect x="8.3" y="3" width="4.7" height="3" fill="#111"/></svg>
<div class="b" style="left:0.00px;top:149.00px;width:592.80px;height:1.00px;background:#e4e4e4"></div>
<svg class="b" style="left:49.70px;top:156.36px;" width="9" height="9" viewBox="0 0 9 9"><rect x="0.6" y="0.6" width="7.8" height="7.8" rx="1.2" fill="none" stroke="#444" stroke-width="1"/><path d="M2.5 4.5H6.5" stroke="#444" stroke-width="0.9"/><path d="M4.5 2.5V6.5" stroke="#444" stroke-width="0.9"/></svg>
<div class="t" style="left:61.30px;top:154.99px;font-size:10.6px;line-height:10.6px;color:#3b3b3b;font-weight:400;letter-spacing:0.02px">Kitchen appliances</div>
<div class="t" style="right:762.90px;top:154.99px;font-size:10.6px;line-height:10.6px;white-space:nowrap"><span style="color:#a3a3a3;letter-spacing:0.1px">...ilding</span><span style="color:#a3a3a3;font-size:8.5px;position:relative;top:-0.8px;margin:0 3.3px 0 2.6px">&#8250;</span><span style="color:#111;font-weight:700;letter-spacing:-0.2px">Stairwell A</span></div>
<div class="t" style="left:326.50px;top:154.99px;font-size:10.6px;line-height:10.6px;color:#3b3b3b;font-weight:400;letter-spacing:0.27px">2/17/2025</div>
<div class="b" style="left:398.60px;top:155.01px;width:11.50px;height:11.50px;background:#5aacf0"></div>
<div class="t" style="left:415.80px;top:154.99px;font-size:10.6px;line-height:10.6px;color:#3b3b3b;font-weight:400;letter-spacing:-0.09px">Electricity house</div>
<div class="b" style="left:506.00px;top:155.16px;width:11.20px;height:11.20px;background:#4a86e8;border-radius:50%"></div>
<div class="t" style="left:523.00px;top:154.99px;font-size:10.6px;line-height:10.6px;color:#3b3b3b;font-weight:400;letter-spacing:-0.25px">52%</div>
<svg class="b" style="left:556.50px;top:157.26px;" width="8" height="8" viewBox="0 0 8 8"><path d="M0.8 0.8L7.2 7.2M7.2 0.8L0.8 7.2" stroke="#9a9a9a" stroke-width="1.15"/></svg>
<svg class="b" style="left:575.00px;top:156.26px;" width="14" height="9" viewBox="0 0 14 9"><path d="M0.5 4.5H3.5" stroke="#222" stroke-width="1"/><path d="M3 2.3L5.6 4.5L3 6.7Z" fill="#222"/><path d="M7.5 0.7V8.3" stroke="#333" stroke-width="1"/><rect x="8.3" y="3" width="4.7" height="3" fill="#111"/></svg>
<div class="b" style="left:0.00px;top:170.52px;width:592.80px;height:1.00px;background:#e4e4e4"></div>
<svg class="b" style="left:49.70px;top:177.88px;" width="9" height="9" viewBox="0 0 9 9"><rect x="0.6" y="0.6" width="7.8" height="7.8" rx="1.2" fill="none" stroke="#444" stroke-width="1"/><path d="M2.5 4.5H6.5" stroke="#444" stroke-width="0.9"/><path d="M4.5 2.5V6.5" stroke="#444" stroke-width="0.9"/></svg>
<div class="t" style="left:61.30px;top:176.51px;font-size:10.6px;line-height:10.6px;color:#3b3b3b;font-weight:400;letter-spacing:0.02px">Electric outlets</div>
<div class="t" style="right:762.90px;top:176.51px;font-size:10.6px;line-height:10.6px;white-space:nowrap"><span style="color:#a3a3a3;letter-spacing:0.1px">...ilding</span><span style="color:#a3a3a3;font-size:8.5px;position:relative;top:-0.8px;margin:0 3.3px 0 2.6px">&#8250;</span><span style="color:#111;font-weight:700;letter-spacing:-0.2px">Stairwell A</span></div>
<div class="t" style="left:326.50px;top:176.51px;font-size:10.6px;line-height:10.6px;color:#3b3b3b;font-weight:400;letter-spacing:0.27px">2/18/2025</div>
<div class="b" style="left:398.60px;top:176.53px;width:11.50px;height:11.50px;background:#5aacf0"></div>
<div class="t" style="left:415.80px;top:176.51px;font-size:10.6px;line-height:10.6px;color:#3b3b3b;font-weight:400;letter-spacing:-0.09px">Electricity house</div>
<div class="b" style="left:506.00px;top:176.68px;width:11.20px;height:11.20px;background:#4a86e8;border-radius:50%"></div>
<div class="t" style="left:523.00px;top:176.51px;font-size:10.6px;line-height:10.6px;color:#3b3b3b;font-weight:400;letter-spacing:-0.25px">48%</div>
<svg class="b" style="left:556.50px;top:178.78px;" width="8" height="8" viewBox="0 0 8 8"><path d="M0.8 0.8L7.2 7.2M7.2 0.8L0.8 7.2" stroke="#9a9a9a" stroke-width="1.15"/></svg>
<svg class="b" style="left:575.00px;top:177.78px;" width="14" height="9" viewBox="0 0 14 9"><path d="M0.5 4.5H3.5" stroke="#222" stroke-width="1"/><path d="M3 2.3L5.6 4.5L3 6.7Z" fill="#222"/><path d="M7.5 0.7V8.3" stroke="#333" stroke-width="1"/><rect x="8.3" y="3" width="4.7" height="3" fill="#111"/></svg>
<div class="b" style="left:0.00px;top:192.04px;width:592.80px;height:1.00px;background:#e4e4e4"></div>
<svg class="b" style="left:49.70px;top:199.40px;" width="9" height="9" viewBox="0 0 9 9"><rect x="0.6" y="0.6" width="7.8" height="7.8" rx="1.2" fill="none" stroke="#444" stroke-width="1"/><path d="M2.5 4.5H6.5" stroke="#444" stroke-width="0.9"/><path d="M4.5 2.5V6.5" stroke="#444" stroke-width="0.9"/></svg>
<div class="t" style="left:61.30px;top:198.03px;font-size:10.6px;line-height:10.6px;color:#3b3b3b;font-weight:400;letter-spacing:0.02px">HVAC appliance installation</div>
<div class="t" style="right:762.90px;top:198.03px;font-size:10.6px;line-height:10.6px;white-space:nowrap"><span style="color:#a3a3a3;letter-spacing:0.1px">...ilding</span><span style="color:#a3a3a3;font-size:8.5px;position:relative;top:-0.8px;margin:0 3.3px 0 2.6px">&#8250;</span><span style="color:#111;font-weight:700;letter-spacing:-0.2px">Stairwell A</span></div>
<div class="t" style="left:326.50px;top:198.03px;font-size:10.6px;line-height:10.6px;color:#3b3b3b;font-weight:400;letter-spacing:0.27px">2/19/2025</div>
<div class="b" style="left:398.60px;top:198.05px;width:11.50px;height:11.50px;background:#56c58c"></div>
<div class="t" style="left:415.80px;top:198.03px;font-size:10.6px;line-height:10.6px;color:#3b3b3b;font-weight:400;letter-spacing:-0.09px">Hvac</div>
<div class="b" style="left:506.00px;top:198.20px;width:11.20px;height:11.20px;background:#4a86e8;border-radius:50%"></div>
<div class="t" style="left:523.00px;top:198.03px;font-size:10.6px;line-height:10.6px;color:#3b3b3b;font-weight:400;letter-spacing:-0.25px">44%</div>
<svg class="b" style="left:556.50px;top:200.30px;" width="8" height="8" viewBox="0 0 8 8"><path d="M0.8 0.8L7.2 7.2M7.2 0.8L0.8 7.2" stroke="#9a9a9a" stroke-width="1.15"/></svg>
<svg class="b" style="left:575.00px;top:199.30px;" width="14" height="9" viewBox="0 0 14 9"><path d="M0.5 4.5H3.5" stroke="#222" stroke-width="1"/><path d="M3 2.3L5.6 4.5L3 6.7Z" fill="#222"/><path d="M7.5 0.7V8.3" stroke="#333" stroke-width="1"/><rect x="8.3" y="3" width="4.7" height="3" fill="#111"/></svg>
<div class="b" style="left:0.00px;top:213.56px;width:592.80px;height:1.00px;background:#e4e4e4"></div>
<svg class="b" style="left:49.70px;top:220.92px;" width="9" height="9" viewBox="0 0 9 9"><rect x="0.6" y="0.6" width="7.8" height="7.8" rx="1.2" fill="none" stroke="#444" stroke-width="1"/><path d="M2.5 4.5H6.5" stroke="#444" stroke-width="0.9"/></svg>
<div class="t" style="left:61.30px;top:219.55px;font-size:10.6px;line-height:10.6px;color:#3b3b3b;font-weight:400;letter-spacing:0.02px">Cleaning</div>
<div class="t" style="right:762.90px;top:219.55px;font-size:10.6px;line-height:10.6px;white-space:nowrap"><span style="color:#a3a3a3;letter-spacing:0.1px">...ilding</span><span style="color:#a3a3a3;font-size:8.5px;position:relative;top:-0.8px;margin:0 3.3px 0 2.6px">&#8250;</span><span style="color:#111;font-weight:700;letter-spacing:-0.2px">Stairwell A</span></div>
<div class="t" style="left:326.50px;top:219.55px;font-size:10.6px;line-height:10.6px;color:#3b3b3b;font-weight:400;letter-spacing:0.27px">2/20/2025</div>
<div class="b" style="left:398.60px;top:219.57px;width:11.50px;height:11.50px;background:#cf7b98"></div>
<div class="t" style="left:415.80px;top:219.55px;font-size:10.6px;line-height:10.6px;color:#3b3b3b;font-weight:400;letter-spacing:-0.09px">Cleaning Co</div>
<div class="b" style="left:506.00px;top:219.72px;width:11.20px;height:11.20px;background:#f0a553;border-radius:50%"></div>
<div class="t" style="left:523.00px;top:219.55px;font-size:10.6px;line-height:10.6px;color:#3b3b3b;font-weight:400;letter-spacing:-0.25px">0%</div>
<svg class="b" style="left:556.50px;top:221.82px;" width="8" height="8" viewBox="0 0 8 8"><path d="M0.8 0.8L7.2 7.2M7.2 0.8L0.8 7.2" stroke="#9a9a9a" stroke-width="1.15"/></svg>
<svg class="b" style="left:575.00px;top:220.82px;" width="14" height="9" viewBox="0 0 14 9"><path d="M0.5 4.5H3.5" stroke="#222" stroke-width="1"/><path d="M3 2.3L5.6 4.5L3 6.7Z" fill="#222"/><path d="M7.5 0.7V8.3" stroke="#333" stroke-width="1"/><rect x="8.3" y="3" width="4.7" height="3" fill="#111"/></svg>
<div class="b" style="left:0.00px;top:235.08px;width:592.80px;height:1.00px;background:#e4e4e4"></div>
<div class="t" style="left:72.50px;top:241.07px;font-size:10.6px;line-height:10.6px;color:#3b3b3b;font-weight:400;letter-spacing:0.02px">Cleaning</div>
<div class="t" style="right:762.90px;top:241.07px;font-size:10.6px;line-height:10.6px;white-space:nowrap"><span style="color:#a3a3a3;letter-spacing:0.1px">... A1</span><span style="color:#a3a3a3;font-size:8.5px;position:relative;top:-0.8px;margin:0 3.3px 0 2.6px">&#8250;</span><span style="color:#111;font-weight:700;letter-spacing:-0.2px">Other rooms</span></div>
<div class="t" style="left:326.50px;top:241.07px;font-size:10.6px;line-height:10.6px;color:#3b3b3b;font-weight:400;letter-spacing:0.27px">2/20/2025</div>
<div class="b" style="left:398.60px;top:241.09px;width:11.50px;height:11.50px;background:#cf7b98"></div>
<div class="t" style="left:415.80px;top:241.07px;font-size:10.6px;line-height:10.6px;color:#3b3b3b;font-weight:400;letter-spacing:-0.09px">Cleaning Co</div>
<div class="b" style="left:506.00px;top:241.24px;width:11.20px;height:11.20px;background:#f0a553;border-radius:50%"></div>
<div class="t" style="left:523.00px;top:241.07px;font-size:10.6px;line-height:10.6px;color:#3b3b3b;font-weight:400;letter-spacing:-0.25px">0%</div>
<svg class="b" style="left:575.00px;top:242.34px;" width="14" height="9" viewBox="0 0 14 9"><path d="M0.5 4.5H3.5" stroke="#222" stroke-width="1"/><path d="M3 2.3L5.6 4.5L3 6.7Z" fill="#222"/><path d="M7.5 0.7V8.3" stroke="#333" stroke-width="1"/><rect x="8.3" y="3" width="4.7" height="3" fill="#111"/></svg>
<div class="b" style="left:0.00px;top:256.60px;width:592.80px;height:1.00px;background:#e4e4e4"></div>
<div class="t" style="left:72.50px;top:262.59px;font-size:10.6px;line-height:10.6px;color:#3b3b3b;font-weight:400;letter-spacing:0.02px">Cleaning</div>
<div class="t" style="right:762.90px;top:262.59px;font-size:10.6px;line-height:10.6px;white-space:nowrap"><span style="color:#a3a3a3;letter-spacing:0.1px">... A2</span><span style="color:#a3a3a3;font-size:8.5px;position:relative;top:-0.8px;margin:0 3.3px 0 2.6px">&#8250;</span><span style="color:#111;font-weight:700;letter-spacing:-0.2px">Other rooms</span></div>
<div class="t" style="left:326.50px;top:262.59px;font-size:10.6px;line-height:10.6px;color:#3b3b3b;font-weight:400;letter-spacing:0.27px">2/21/2025</div>
<div class="b" style="left:398.60px;top:262.61px;width:11.50px;height:11.50px;background:#cf7b98"></div>
<div class="t" style="left:415.80px;top:262.59px;font-size:10.6px;line-height:10.6px;color:#3b3b3b;font-weight:400;letter-spacing:-0.09px">Cleaning Co</div>
<div class="b" style="left:506.00px;top:262.76px;width:11.20px;height:11.20px;background:#f0a553;border-radius:50%"></div>
<div class="t" style="left:523.00px;top:262.59px;font-size:10.6px;line-height:10.6px;color:#3b3b3b;font-weight:400;letter-spacing:-0.25px">0%</div>
<svg class="b" style="left:575.00px;top:263.86px;" width="14" height="9" viewBox="0 0 14 9"><path d="M0.5 4.5H3.5" stroke="#222" stroke-width="1"/><path d="M3 2.3L5.6 4.5L3 6.7Z" fill="#222"/><path d="M7.5 0.7V8.3" stroke="#333" stroke-width="1"/><rect x="8.3" y="3" width="4.7" height="3" fill="#111"/></svg>
<div class="b" style="left:0.00px;top:278.12px;width:592.80px;height:1.00px;background:#e4e4e4"></div>
<div class="t" style="left:72.50px;top:284.11px;font-size:10.6px;line-height:10.6px;color:#3b3b3b;font-weight:400;letter-spacing:0.02px">Cleaning</div>
<div class="t" style="right:762.90px;top:284.11px;font-size:10.6px;line-height:10.6px;white-space:nowrap"><span style="color:#a3a3a3;letter-spacing:0.1px">... A3</span><span style="color:#a3a3a3;font-size:8.5px;position:relative;top:-0.8px;margin:0 3.3px 0 2.6px">&#8250;</span><span style="color:#111;font-weight:700;letter-spacing:-0.2px">Other rooms</span></div>
<div class="t" style="left:326.50px;top:284.11px;font-size:10.6px;line-height:10.6px;color:#3b3b3b;font-weight:400;letter-spacing:0.27px">2/24/2025</div>
<div class="b" style="left:398.60px;top:284.13px;width:11.50px;height:11.50px;background:#cf7b98"></div>
<div class="t" style="left:415.80px;top:284.11px;font-size:10.6px;line-height:10.6px;color:#3b3b3b;font-weight:400;letter-spacing:-0.09px">Cleaning Co</div>
<div class="b" style="left:506.00px;top:284.28px;width:11.20px;height:11.20px;background:#f0a553;border-radius:50%"></div>
<div class="t" style="left:523.00px;top:284.11px;font-size:10.6px;line-height:10.6px;color:#3b3b3b;font-weight:400;letter-spacing:-0.25px">0%</div>
<svg class="b" style="left:575.00px;top:285.38px;" width="14" height="9" viewBox="0 0 14 9"><path d="M0.5 4.5H3.5" stroke="#222" stroke-width="1"/><path d="M3 2.3L5.6 4.5L3 6.7Z" fill="#222"/><path d="M7.5 0.7V8.3" stroke="#333" stroke-width="1"/><rect x="8.3" y="3" width="4.7" height="3" fill="#111"/></svg>
<div class="b" style="left:0.00px;top:299.64px;width:592.80px;height:1.00px;background:#e4e4e4"></div>
<div class="t" style="left:72.50px;top:305.63px;font-size:10.6px;line-height:10.6px;color:#3b3b3b;font-weight:400;letter-spacing:0.02px">Cleaning</div>
<div class="t" style="right:762.90px;top:305.63px;font-size:10.6px;line-height:10.6px;white-space:nowrap"><span style="color:#a3a3a3;letter-spacing:0.1px">... A4</span><span style="color:#a3a3a3;font-size:8.5px;position:relative;top:-0.8px;margin:0 3.3px 0 2.6px">&#8250;</span><span style="color:#111;font-weight:700;letter-spacing:-0.2px">Other rooms</span></div>
<div class="t" style="left:326.50px;top:305.63px;font-size:10.6px;line-height:10.6px;color:#3b3b3b;font-weight:400;letter-spacing:0.27px">2/25/2025</div>
<div class="b" style="left:398.60px;top:305.65px;width:11.50px;height:11.50px;background:#cf7b98"></div>
<div class="t" style="left:415.80px;top:305.63px;font-size:10.6px;line-height:10.6px;color:#3b3b3b;font-weight:400;letter-spacing:-0.09px">Cleaning Co</div>
<div class="b" style="left:506.00px;top:305.80px;width:11.20px;height:11.20px;background:#f0a553;border-radius:50%"></div>
<div class="t" style="left:523.00px;top:305.63px;font-size:10.6px;line-height:10.6px;color:#3b3b3b;font-weight:400;letter-spacing:-0.25px">0%</div>
<svg class="b" style="left:575.00px;top:306.90px;" width="14" height="9" viewBox="0 0 14 9"><path d="M0.5 4.5H3.5" stroke="#222" stroke-width="1"/><path d="M3 2.3L5.6 4.5L3 6.7Z" fill="#222"/><path d="M7.5 0.7V8.3" stroke="#333" stroke-width="1"/><rect x="8.3" y="3" width="4.7" height="3" fill="#111"/></svg>
<div class="b" style="left:0.00px;top:321.16px;width:592.80px;height:1.00px;background:#e4e4e4"></div>
<div class="t" style="left:72.50px;top:327.15px;font-size:10.6px;line-height:10.6px;color:#3b3b3b;font-weight:400;letter-spacing:0.02px">Cleaning</div>
<div class="t" style="right:762.90px;top:327.15px;font-size:10.6px;line-height:10.6px;white-space:nowrap"><span style="color:#a3a3a3;letter-spacing:0.1px">... A5</span><span style="color:#a3a3a3;font-size:8.5px;position:relative;top:-0.8px;margin:0 3.3px 0 2.6px">&#8250;</span><span style="color:#111;font-weight:700;letter-spacing:-0.2px">Other rooms</span></div>
<div class="t" style="left:326.50px;top:327.15px;font-size:10.6px;line-height:10.6px;color:#3b3b3b;font-weight:400;letter-spacing:0.27px">2/26/2025</div>
<div class="b" style="left:398.60px;top:327.17px;width:11.50px;height:11.50px;background:#cf7b98"></div>
<div class="t" style="left:415.80px;top:327.15px;font-size:10.6px;line-height:10.6px;color:#3b3b3b;font-weight:400;letter-spacing:-0.09px">Cleaning Co</div>
<div class="b" style="left:506.00px;top:327.32px;width:11.20px;height:11.20px;background:#f0a553;border-radius:50%"></div>
<div class="t" style="left:523.00px;top:327.15px;font-size:10.6px;line-height:10.6px;color:#3b3b3b;font-weight:400;letter-spacing:-0.25px">0%</div>
<svg class="b" style="left:575.00px;top:328.42px;" width="14" height="9" viewBox="0 0 14 9"><path d="M0.5 4.5H3.5" stroke="#222" stroke-width="1"/><path d="M3 2.3L5.6 4.5L3 6.7Z" fill="#222"/><path d="M7.5 0.7V8.3" stroke="#333" stroke-width="1"/><rect x="8.3" y="3" width="4.7" height="3" fill="#111"/></svg>
<div class="b" style="left:0.00px;top:342.68px;width:592.80px;height:1.00px;background:#e4e4e4"></div>
<div class="t" style="left:72.50px;top:348.67px;font-size:10.6px;line-height:10.6px;color:#3b3b3b;font-weight:400;letter-spacing:0.02px">Cleaning</div>
<div class="t" style="right:762.90px;top:348.67px;font-size:10.6px;line-height:10.6px;white-space:nowrap"><span style="color:#a3a3a3;letter-spacing:0.1px">... A6</span><span style="color:#a3a3a3;font-size:8.5px;position:relative;top:-0.8px;margin:0 3.3px 0 2.6px">&#8250;</span><span style="color:#111;font-weight:700;letter-spacing:-0.2px">Other rooms</span></div>
<div class="t" style="left:326.50px;top:348.67px;font-size:10.6px;line-height:10.6px;color:#3b3b3b;font-weight:400;letter-spacing:0.27px">2/27/2025</div>
<div class="b" style="left:398.60px;top:348.69px;width:11.50px;height:11.50px;background:#cf7b98"></div>
<div class="t" style="left:415.80px;top:348.67px;font-size:10.6px;line-height:10.6px;color:#3b3b3b;font-weight:400;letter-spacing:-0.09px">Cleaning Co</div>
<div class="b" style="left:506.00px;top:348.84px;width:11.20px;height:11.20px;background:#f0a553;border-radius:50%"></div>
<div class="t" style="left:523.00px;top:348.67px;font-size:10.6px;line-height:10.6px;color:#3b3b3b;font-weight:400;letter-spacing:-0.25px">0%</div>
<svg class="b" style="left:575.00px;top:349.94px;" width="14" height="9" viewBox="0 0 14 9"><path d="M0.5 4.5H3.5" stroke="#222" stroke-width="1"/><path d="M3 2.3L5.6 4.5L3 6.7Z" fill="#222"/><path d="M7.5 0.7V8.3" stroke="#333" stroke-width="1"/><rect x="8.3" y="3" width="4.7" height="3" fill="#111"/></svg>
<div class="b" style="left:0.00px;top:364.20px;width:592.80px;height:1.00px;background:#e4e4e4"></div>
<div class="t" style="left:72.50px;top:370.19px;font-size:10.6px;line-height:10.6px;color:#3b3b3b;font-weight:400;letter-spacing:0.02px">Cleaning</div>
<div class="t" style="right:762.90px;top:370.19px;font-size:10.6px;line-height:10.6px;white-space:nowrap"><span style="color:#a3a3a3;letter-spacing:0.1px">... A7</span><span style="color:#a3a3a3;font-size:8.5px;position:relative;top:-0.8px;margin:0 3.3px 0 2.6px">&#8250;</span><span style="color:#111;font-weight:700;letter-spacing:-0.2px">Other oroms</span></div>
<div class="t" style="left:326.50px;top:370.19px;font-size:10.6px;line-height:10.6px;color:#3b3b3b;font-weight:400;letter-spacing:0.27px">2/28/2025</div>
<div class="b" style="left:398.60px;top:370.21px;width:11.50px;height:11.50px;background:#cf7b98"></div>
<div class="t" style="left:415.80px;top:370.19px;font-size:10.6px;line-height:10.6px;color:#3b3b3b;font-weight:400;letter-spacing:-0.09px">Cleaning Co</div>
<div class="b" style="left:506.00px;top:370.36px;width:11.20px;height:11.20px;background:#f0a553;border-radius:50%"></div>
<div class="t" style="left:523.00px;top:370.19px;font-size:10.6px;line-height:10.6px;color:#3b3b3b;font-weight:400;letter-spacing:-0.25px">0%</div>
<svg class="b" style="left:575.00px;top:371.46px;" width="14" height="9" viewBox="0 0 14 9"><path d="M0.5 4.5H3.5" stroke="#222" stroke-width="1"/><path d="M3 2.3L5.6 4.5L3 6.7Z" fill="#222"/><path d="M7.5 0.7V8.3" stroke="#333" stroke-width="1"/><rect x="8.3" y="3" width="4.7" height="3" fill="#111"/></svg>
<div class="b" style="left:0.00px;top:385.72px;width:592.80px;height:1.00px;background:#e4e4e4"></div>
<div class="t" style="left:72.50px;top:391.71px;font-size:10.6px;line-height:10.6px;color:#3b3b3b;font-weight:400;letter-spacing:0.02px">Cleaning</div>
<div class="t" style="right:762.90px;top:391.71px;font-size:10.6px;line-height:10.6px;white-space:nowrap"><span style="color:#a3a3a3;letter-spacing:0.1px">... A8</span><span style="color:#a3a3a3;font-size:8.5px;position:relative;top:-0.8px;margin:0 3.3px 0 2.6px">&#8250;</span><span style="color:#111;font-weight:700;letter-spacing:-0.2px">Other rooms</span></div>
<div class="t" style="left:326.50px;top:391.71px;font-size:10.6px;line-height:10.6px;color:#3b3b3b;font-weight:400;letter-spacing:0.27px">3/3/2025</div>
<div class="b" style="left:398.60px;top:391.73px;width:11.50px;height:11.50px;background:#cf7b98"></div>
<div class="t" style="left:415.80px;top:391.71px;font-size:10.6px;line-height:10.6px;color:#3b3b3b;font-weight:400;letter-spacing:-0.09px">Cleaning Co</div>
<div class="b" style="left:506.00px;top:391.88px;width:11.20px;height:11.20px;background:#f0a553;border-radius:50%"></div>
<div class="t" style="left:523.00px;top:391.71px;font-size:10.6px;line-height:10.6px;color:#3b3b3b;font-weight:400;letter-spacing:-0.25px">0%</div>
<svg class="b" style="left:575.00px;top:392.98px;" width="14" height="9" viewBox="0 0 14 9"><path d="M0.5 4.5H3.5" stroke="#222" stroke-width="1"/><path d="M3 2.3L5.6 4.5L3 6.7Z" fill="#222"/><path d="M7.5 0.7V8.3" stroke="#333" stroke-width="1"/><rect x="8.3" y="3" width="4.7" height="3" fill="#111"/></svg>
<div class="b" style="left:0.00px;top:407.24px;width:592.80px;height:1.00px;background:#e4e4e4"></div>
<div class="t" style="left:72.50px;top:413.23px;font-size:10.6px;line-height:10.6px;color:#3b3b3b;font-weight:400;letter-spacing:0.02px">Cleaning</div>
<div class="t" style="right:762.90px;top:413.23px;font-size:10.6px;line-height:10.6px;white-space:nowrap"><span style="color:#a3a3a3;letter-spacing:0.1px">... A9</span><span style="color:#a3a3a3;font-size:8.5px;position:relative;top:-0.8px;margin:0 3.3px 0 2.6px">&#8250;</span><span style="color:#111;font-weight:700;letter-spacing:-0.2px">Other rooms</span></div>
<div class="t" style="left:326.50px;top:413.23px;font-size:10.6px;line-height:10.6px;color:#3b3b3b;font-weight:400;letter-spacing:0.27px">3/4/2025</div>
<div class="b" style="left:398.60px;top:413.25px;width:11.50px;height:11.50px;background:#cf7b98"></div>
<div class="t" style="left:415.80px;top:413.23px;font-size:10.6px;line-height:10.6px;color:#3b3b3b;font-weight:400;letter-spacing:-0.09px">Cleaning Co</div>
<div class="b" style="left:506.00px;top:413.40px;width:11.20px;height:11.20px;background:#f0a553;border-radius:50%"></div>
<div class="t" style="left:523.00px;top:413.23px;font-size:10.6px;line-height:10.6px;color:#3b3b3b;font-weight:400;letter-spacing:-0.25px">0%</div>
<svg class="b" style="left:575.00px;top:414.50px;" width="14" height="9" viewBox="0 0 14 9"><path d="M0.5 4.5H3.5" stroke="#222" stroke-width="1"/><path d="M3 2.3L5.6 4.5L3 6.7Z" fill="#222"/><path d="M7.5 0.7V8.3" stroke="#333" stroke-width="1"/><rect x="8.3" y="3" width="4.7" height="3" fill="#111"/></svg>
<div class="b" style="left:0.00px;top:428.76px;width:592.80px;height:1.00px;background:#e4e4e4"></div>
<div class="t" style="left:72.50px;top:434.75px;font-size:10.6px;line-height:10.6px;color:#3b3b3b;font-weight:400;letter-spacing:0.02px">Cleaning</div>
<div class="t" style="right:762.90px;top:434.75px;font-size:10.6px;line-height:10.6px;white-space:nowrap"><span style="color:#a3a3a3;letter-spacing:0.1px">...10</span><span style="color:#a3a3a3;font-size:8.5px;position:relative;top:-0.8px;margin:0 3.3px 0 2.6px">&#8250;</span><span style="color:#111;font-weight:700;letter-spacing:-0.2px">Other rooms</span></div>
<div class="t" style="left:326.50px;top:434.75px;font-size:10.6px;line-height:10.6px;color:#3b3b3b;font-weight:400;letter-spacing:0.27px">3/5/2025</div>
<div class="b" style="left:398.60px;top:434.77px;width:11.50px;height:11.50px;background:#cf7b98"></div>
<div class="t" style="left:415.80px;top:434.75px;font-size:10.6px;line-height:10.6px;color:#3b3b3b;font-weight:400;letter-spacing:-0.09px">Cleaning Co</div>
<div class="b" style="left:506.00px;top:434.92px;width:11.20px;height:11.20px;background:#f0a553;border-radius:50%"></div>
<div class="t" style="left:523.00px;top:434.75px;font-size:10.6px;line-height:10.6px;color:#3b3b3b;font-weight:400;letter-spacing:-0.25px">0%</div>
<svg class="b" style="left:575.00px;top:436.02px;" width="14" height="9" viewBox="0 0 14 9"><path d="M0.5 4.5H3.5" stroke="#222" stroke-width="1"/><path d="M3 2.3L5.6 4.5L3 6.7Z" fill="#222"/><path d="M7.5 0.7V8.3" stroke="#333" stroke-width="1"/><rect x="8.3" y="3" width="4.7" height="3" fill="#111"/></svg>
<div class="b" style="left:0.00px;top:450.28px;width:592.80px;height:1.00px;background:#e4e4e4"></div>
<div class="t" style="left:72.50px;top:456.27px;font-size:10.6px;line-height:10.6px;color:#3b3b3b;font-weight:400;letter-spacing:0.02px">Cleaning</div>
<div class="t" style="right:762.90px;top:456.27px;font-size:10.6px;line-height:10.6px;white-space:nowrap"><span style="color:#a3a3a3;letter-spacing:0.1px">...11</span><span style="color:#a3a3a3;font-size:8.5px;position:relative;top:-0.8px;margin:0 3.3px 0 2.6px">&#8250;</span><span style="color:#111;font-weight:700;letter-spacing:-0.2px">Other rooms</span></div>
<div class="t" style="left:326.50px;top:456.27px;font-size:10.6px;line-height:10.6px;color:#3b3b3b;font-weight:400;letter-spacing:0.27px">3/6/2025</div>
<div class="b" style="left:398.60px;top:456.29px;width:11.50px;height:11.50px;background:#cf7b98"></div>
<div class="t" style="left:415.80px;top:456.27px;font-size:10.6px;line-height:10.6px;color:#3b3b3b;font-weight:400;letter-spacing:-0.09px">Cleaning Co</div>
<div class="b" style="left:506.00px;top:456.44px;width:11.20px;height:11.20px;background:#f0a553;border-radius:50%"></div>
<div class="t" style="left:523.00px;top:456.27px;font-size:10.6px;line-height:10.6px;color:#3b3b3b;font-weight:400;letter-spacing:-0.25px">0%</div>
<svg class="b" style="left:575.00px;top:457.54px;" width="14" height="9" viewBox="0 0 14 9"><path d="M0.5 4.5H3.5" stroke="#222" stroke-width="1"/><path d="M3 2.3L5.6 4.5L3 6.7Z" fill="#222"/><path d="M7.5 0.7V8.3" stroke="#333" stroke-width="1"/><rect x="8.3" y="3" width="4.7" height="3" fill="#111"/></svg>
<div class="b" style="left:0.00px;top:471.80px;width:592.80px;height:1.00px;background:#e4e4e4"></div>
<div class="t" style="left:72.50px;top:477.79px;font-size:10.6px;line-height:10.6px;color:#3b3b3b;font-weight:400;letter-spacing:0.02px">Cleaning</div>
<div class="t" style="right:762.90px;top:477.79px;font-size:10.6px;line-height:10.6px;white-space:nowrap"><span style="color:#a3a3a3;letter-spacing:0.1px">...12</span><span style="color:#a3a3a3;font-size:8.5px;position:relative;top:-0.8px;margin:0 3.3px 0 2.6px">&#8250;</span><span style="color:#111;font-weight:700;letter-spacing:-0.2px">Other rooms</span></div>
<div class="t" style="left:326.50px;top:477.79px;font-size:10.6px;line-height:10.6px;color:#3b3b3b;font-weight:400;letter-spacing:0.27px">3/7/2025</div>
<div class="b" style="left:398.60px;top:477.81px;width:11.50px;height:11.50px;background:#cf7b98"></div>
<div class="t" style="left:415.80px;top:477.79px;font-size:10.6px;line-height:10.6px;color:#3b3b3b;font-weight:400;letter-spacing:-0.09px">Cleaning Co</div>
<div class="b" style="left:506.00px;top:477.96px;width:11.20px;height:11.20px;background:#f0a553;border-radius:50%"></div>
<div class="t" style="left:523.00px;top:477.79px;font-size:10.6px;line-height:10.6px;color:#3b3b3b;font-weight:400;letter-spacing:-0.25px">0%</div>
<svg class="b" style="left:575.00px;top:479.06px;" width="14" height="9" viewBox="0 0 14 9"><path d="M0.5 4.5H3.5" stroke="#222" stroke-width="1"/><path d="M3 2.3L5.6 4.5L3 6.7Z" fill="#222"/><path d="M7.5 0.7V8.3" stroke="#333" stroke-width="1"/><rect x="8.3" y="3" width="4.7" height="3" fill="#111"/></svg>
<div class="b" style="left:0.00px;top:493.32px;width:592.80px;height:1.00px;background:#e4e4e4"></div>
<div class="t" style="left:72.50px;top:499.31px;font-size:10.6px;line-height:10.6px;color:#3b3b3b;font-weight:400;letter-spacing:0.02px">Cleaning</div>
<div class="t" style="right:762.90px;top:499.31px;font-size:10.6px;line-height:10.6px;white-space:nowrap"><span style="color:#a3a3a3;letter-spacing:0.1px">...13</span><span style="color:#a3a3a3;font-size:8.5px;position:relative;top:-0.8px;margin:0 3.3px 0 2.6px">&#8250;</span><span style="color:#111;font-weight:700;letter-spacing:-0.2px">Other rooms</span></div>
<div class="t" style="left:326.50px;top:499.31px;font-size:10.6px;line-height:10.6px;color:#3b3b3b;font-weight:400;letter-spacing:0.27px">3/10/2025</div>
<div class="b" style="left:398.60px;top:499.33px;width:11.50px;height:11.50px;background:#cf7b98"></div>
<div class="t" style="left:415.80px;top:499.31px;font-size:10.6px;line-height:10.6px;color:#3b3b3b;font-weight:400;letter-spacing:-0.09px">Cleaning Co</div>
<div class="b" style="left:506.00px;top:499.48px;width:11.20px;height:11.20px;background:#eceef9;border-radius:50%"></div>
<div class="t" style="left:523.00px;top:499.31px;font-size:10.6px;line-height:10.6px;color:#3b3b3b;font-weight:400;letter-spacing:-0.25px">0%</div>
<svg class="b" style="left:575.00px;top:500.58px;" width="14" height="9" viewBox="0 0 14 9"><path d="M0.5 4.5H3.5" stroke="#222" stroke-width="1"/><path d="M3 2.3L5.6 4.5L3 6.7Z" fill="#222"/><path d="M7.5 0.7V8.3" stroke="#333" stroke-width="1"/><rect x="8.3" y="3" width="4.7" height="3" fill="#111"/></svg>
<div class="b" style="left:0.00px;top:514.84px;width:592.80px;height:1.00px;background:#e4e4e4"></div>
<div class="t" style="left:72.50px;top:520.83px;font-size:10.6px;line-height:10.6px;color:#3b3b3b;font-weight:400;letter-spacing:0.02px">Cleaning</div>
<div class="t" style="right:762.90px;top:520.83px;font-size:10.6px;line-height:10.6px;white-space:nowrap"><span style="color:#a3a3a3;letter-spacing:0.1px">...14</span><span style="color:#a3a3a3;font-size:8.5px;position:relative;top:-0.8px;margin:0 3.3px 0 2.6px">&#8250;</span><span style="color:#111;font-weight:700;letter-spacing:-0.2px">Other rooms</span></div>
<div class="t" style="left:326.50px;top:520.83px;font-size:10.6px;line-height:10.6px;color:#3b3b3b;font-weight:400;letter-spacing:0.27px">3/11/2025</div>
<div class="b" style="left:398.60px;top:520.85px;width:11.50px;height:11.50px;background:#cf7b98"></div>
<div class="t" style="left:415.80px;top:520.83px;font-size:10.6px;line-height:10.6px;color:#3b3b3b;font-weight:400;letter-spacing:-0.09px">Cleaning Co</div>
<div class="b" style="left:506.00px;top:521.00px;width:11.20px;height:11.20px;background:#eceef9;border-radius:50%"></div>
<div class="t" style="left:523.00px;top:520.83px;font-size:10.6px;line-height:10.6px;color:#3b3b3b;font-weight:400;letter-spacing:-0.25px">0%</div>
<svg class="b" style="left:575.00px;top:522.10px;" width="14" height="9" viewBox="0 0 14 9"><path d="M0.5 4.5H3.5" stroke="#222" stroke-width="1"/><path d="M3 2.3L5.6 4.5L3 6.7Z" fill="#222"/><path d="M7.5 0.7V8.3" stroke="#333" stroke-width="1"/><rect x="8.3" y="3" width="4.7" height="3" fill="#111"/></svg>
<div class="b" style="left:0.00px;top:536.36px;width:592.80px;height:1.00px;background:#e4e4e4"></div>
<div class="t" style="left:72.50px;top:542.35px;font-size:10.6px;line-height:10.6px;color:#3b3b3b;font-weight:400;letter-spacing:0.02px">Cleaning</div>
<div class="t" style="right:762.90px;top:542.35px;font-size:10.6px;line-height:10.6px;white-space:nowrap"><span style="color:#a3a3a3;letter-spacing:0.1px">...15</span><span style="color:#a3a3a3;font-size:8.5px;position:relative;top:-0.8px;margin:0 3.3px 0 2.6px">&#8250;</span><span style="color:#111;font-weight:700;letter-spacing:-0.2px">Other rooms</span></div>
<div class="t" style="left:326.50px;top:542.35px;font-size:10.6px;line-height:10.6px;color:#3b3b3b;font-weight:400;letter-spacing:0.27px">3/12/2025</div>
<div class="b" style="left:398.60px;top:542.37px;width:11.50px;height:11.50px;background:#cf7b98"></div>
<div class="t" style="left:415.80px;top:542.35px;font-size:10.6px;line-height:10.6px;color:#3b3b3b;font-weight:400;letter-spacing:-0.09px">Cleaning Co</div>
<div class="b" style="left:506.00px;top:542.52px;width:11.20px;height:11.20px;background:#eceef9;border-radius:50%"></div>
<div class="t" style="left:523.00px;top:542.35px;font-size:10.6px;line-height:10.6px;color:#3b3b3b;font-weight:400;letter-spacing:-0.25px">0%</div>
<svg class="b" style="left:575.00px;top:543.62px;" width="14" height="9" viewBox="0 0 14 9"><path d="M0.5 4.5H3.5" stroke="#222" stroke-width="1"/><path d="M3 2.3L5.6 4.5L3 6.7Z" fill="#222"/><path d="M7.5 0.7V8.3" stroke="#333" stroke-width="1"/><rect x="8.3" y="3" width="4.7" height="3" fill="#111"/></svg>
<div class="b" style="left:0.00px;top:557.88px;width:592.80px;height:1.00px;background:#e4e4e4"></div>
<div class="t" style="left:72.50px;top:563.87px;font-size:10.6px;line-height:10.6px;color:#3b3b3b;font-weight:400;letter-spacing:0.02px">Cleaning</div>
<div class="t" style="right:762.90px;top:563.87px;font-size:10.6px;line-height:10.6px;white-space:nowrap"><span style="color:#a3a3a3;letter-spacing:0.1px">...16</span><span style="color:#a3a3a3;font-size:8.5px;position:relative;top:-0.8px;margin:0 3.3px 0 2.6px">&#8250;</span><span style="color:#111;font-weight:700;letter-spacing:-0.2px">Other rooms</span></div>
<div class="t" style="left:326.50px;top:563.87px;font-size:10.6px;line-height:10.6px;color:#3b3b3b;font-weight:400;letter-spacing:0.27px">3/13/2025</div>
<div class="b" style="left:398.60px;top:563.89px;width:11.50px;height:11.50px;background:#cf7b98"></div>
<div class="t" style="left:415.80px;top:563.87px;font-size:10.6px;line-height:10.6px;color:#3b3b3b;font-weight:400;letter-spacing:-0.09px">Cleaning Co</div>
<div class="b" style="left:506.00px;top:564.04px;width:11.20px;height:11.20px;background:#eceef9;border-radius:50%"></div>
<div class="t" style="left:523.00px;top:563.87px;font-size:10.6px;line-height:10.6px;color:#3b3b3b;font-weight:400;letter-spacing:-0.25px">0%</div>
<svg class="b" style="left:575.00px;top:565.14px;" width="14" height="9" viewBox="0 0 14 9"><path d="M0.5 4.5H3.5" stroke="#222" stroke-width="1"/><path d="M3 2.3L5.6 4.5L3 6.7Z" fill="#222"/><path d="M7.5 0.7V8.3" stroke="#333" stroke-width="1"/><rect x="8.3" y="3" width="4.7" height="3" fill="#111"/></svg>
<div class="b" style="left:0.00px;top:579.40px;width:592.80px;height:1.00px;background:#e4e4e4"></div>
<div class="t" style="left:72.50px;top:585.39px;font-size:10.6px;line-height:10.6px;color:#3b3b3b;font-weight:400;letter-spacing:0.02px">Cleaning</div>
<div class="t" style="right:762.90px;top:585.39px;font-size:10.6px;line-height:10.6px;white-space:nowrap"><span style="color:#a3a3a3;letter-spacing:0.1px">...17</span><span style="color:#a3a3a3;font-size:8.5px;position:relative;top:-0.8px;margin:0 3.3px 0 2.6px">&#8250;</span><span style="color:#111;font-weight:700;letter-spacing:-0.2px">Other rooms</span></div>
<div class="t" style="left:326.50px;top:585.39px;font-size:10.6px;line-height:10.6px;color:#3b3b3b;font-weight:400;letter-spacing:0.27px">3/14/2025</div>
<div class="b" style="left:398.60px;top:585.41px;width:11.50px;height:11.50px;background:#cf7b98"></div>
<div class="t" style="left:415.80px;top:585.39px;font-size:10.6px;line-height:10.6px;color:#3b3b3b;font-weight:400;letter-spacing:-0.09px">Cleaning Co</div>
<div class="b" style="left:506.00px;top:585.56px;width:11.20px;height:11.20px;background:#eceef9;border-radius:50%"></div>
<div class="t" style="left:523.00px;top:585.39px;font-size:10.6px;line-height:10.6px;color:#3b3b3b;font-weight:400;letter-spacing:-0.25px">0%</div>
<svg class="b" style="left:575.00px;top:586.66px;" width="14" height="9" viewBox="0 0 14 9"><path d="M0.5 4.5H3.5" stroke="#222" stroke-width="1"/><path d="M3 2.3L5.6 4.5L3 6.7Z" fill="#222"/><path d="M7.5 0.7V8.3" stroke="#333" stroke-width="1"/><rect x="8.3" y="3" width="4.7" height="3" fill="#111"/></svg>
<div class="b" style="left:0.00px;top:600.92px;width:592.80px;height:1.00px;background:#e4e4e4"></div>
<div class="t" style="left:72.50px;top:606.91px;font-size:10.6px;line-height:10.6px;color:#3b3b3b;font-weight:400;letter-spacing:0.02px">Cleaning</div>
<div class="t" style="right:762.90px;top:606.91px;font-size:10.6px;line-height:10.6px;white-space:nowrap"><span style="color:#a3a3a3;letter-spacing:0.1px">...18</span><span style="color:#a3a3a3;font-size:8.5px;position:relative;top:-0.8px;margin:0 3.3px 0 2.6px">&#8250;</span><span style="color:#111;font-weight:700;letter-spacing:-0.2px">Other rooms</span></div>
<div class="t" style="left:326.50px;top:606.91px;font-size:10.6px;line-height:10.6px;color:#3b3b3b;font-weight:400;letter-spacing:0.27px">3/17/2025</div>
<div class="b" style="left:398.60px;top:606.93px;width:11.50px;height:11.50px;background:#cf7b98"></div>
<div class="t" style="left:415.80px;top:606.91px;font-size:10.6px;line-height:10.6px;color:#3b3b3b;font-weight:400;letter-spacing:-0.09px">Cleaning Co</div>
<div class="b" style="left:506.00px;top:607.08px;width:11.20px;height:11.20px;background:#eceef9;border-radius:50%"></div>
<div class="t" style="left:523.00px;top:606.91px;font-size:10.6px;line-height:10.6px;color:#3b3b3b;font-weight:400;letter-spacing:-0.25px">0%</div>
<svg class="b" style="left:575.00px;top:608.18px;" width="14" height="9" viewBox="0 0 14 9"><path d="M0.5 4.5H3.5" stroke="#222" stroke-width="1"/><path d="M3 2.3L5.6 4.5L3 6.7Z" fill="#222"/><path d="M7.5 0.7V8.3" stroke="#333" stroke-width="1"/><rect x="8.3" y="3" width="4.7" height="3" fill="#111"/></svg>
<div class="b" style="left:0.00px;top:622.44px;width:592.80px;height:1.00px;background:#e4e4e4"></div>
<div class="b" style="left:212.00px;top:130.50px;width:1.00px;height:479.50px;background:#e4e4e4"></div>
<div class="b" style="left:319.90px;top:130.50px;width:1.00px;height:479.50px;background:#e4e4e4"></div>
<div class="b" style="left:392.00px;top:130.50px;width:1.00px;height:479.50px;background:#e4e4e4"></div>
<div class="b" style="left:500.10px;top:130.50px;width:1.00px;height:479.50px;background:#e4e4e4"></div>
<div class="b" style="left:571.20px;top:130.50px;width:1.00px;height:479.50px;background:#e4e4e4"></div>
<div class="b" style="left:0.00px;top:74.50px;width:592.80px;height:57.20px;background:#fbfbfb"></div>
<div class="b" style="left:0.00px;top:129.50px;width:592.80px;height:1.50px;background:linear-gradient(#fbfbfb,#e6e6e6)"></div>
<div class="b" style="left:0.00px;top:131.00px;width:592.80px;height:1.40px;background:#c6c6c6"></div>
<div class="b" style="left:0.00px;top:132.40px;width:592.80px;height:2.00px;background:linear-gradient(#00000014,#0000)"></div>
<svg class="b" style="left:3.50px;top:101.00px;" width="20" height="9" viewBox="0 0 20 9"><rect x="0.6" y="0.6" width="7.8" height="7.8" rx="1.2" fill="none" stroke="#333" stroke-width="1"/><path d="M2.5 4.5H6.5M4.5 2.5V6.5" stroke="#333" stroke-width="0.9"/><rect x="10.6" y="0.6" width="7.8" height="7.8" rx="1.2" fill="none" stroke="#333" stroke-width="1"/><path d="M12.5 4.5H16.5" stroke="#333" stroke-width="0.9"/></svg>
<div class="t" style="left:9.80px;top:118.53px;font-size:10px;line-height:10px;color:#2b2b2b;font-weight:700;letter-spacing:-0.05px">Work package</div>
<svg class="b" style="left:175.00px;top:111.30px;" width="13" height="13" viewBox="0 0 13 13"><rect x="0.7" y="0.7" width="11.6" height="11.6" rx="2" fill="none" stroke="#333" stroke-width="1.3"/><path d="M3.2 1V12" stroke="#555" stroke-width="0.9"/><path d="M9.3 4.8V8.3H5.6M7.2 6.7L5.6 8.3L7.2 9.9" fill="none" stroke="#222" stroke-width="1.1"/></svg>
<svg class="b" style="left:201.00px;top:110.00px;" width="8" height="16" viewBox="0 0 8 16"><circle cx="3.5" cy="3.20" r="1.25" fill="#222"/><circle cx="3.5" cy="7.40" r="1.25" fill="#222"/><circle cx="3.5" cy="11.60" r="1.25" fill="#222"/></svg>
<div class="t" style="left:219.00px;top:118.53px;font-size:10px;line-height:10px;color:#2b2b2b;font-weight:700;">Area</div>
<div class="t" style="left:326.50px;top:118.53px;font-size:10px;line-height:10px;color:#2b2b2b;font-weight:700;">Start date</div>
<div class="t" style="left:398.00px;top:118.53px;font-size:10px;line-height:10px;color:#2b2b2b;font-weight:700;">Team</div>
<div class="t" style="left:505.60px;top:118.53px;font-size:10px;line-height:10px;color:#2b2b2b;font-weight:700;">Status</div>
<div class="b" style="left:213.10px;top:107.00px;width:1.00px;height:21.00px;background:#e2e2e2"></div>
<div class="b" style="left:319.90px;top:107.00px;width:1.00px;height:21.00px;background:#e2e2e2"></div>
<div class="b" style="left:392.00px;top:107.00px;width:1.00px;height:21.00px;background:#e2e2e2"></div>
<div class="b" style="left:500.10px;top:107.00px;width:1.00px;height:21.00px;background:#e2e2e2"></div>
<div class="b" style="left:571.20px;top:107.00px;width:1.00px;height:21.00px;background:#e2e2e2"></div>
<svg class="b" style="left:576.00px;top:81.00px;" width="12" height="16" viewBox="0 0 12 16"><circle cx="3.80" cy="3.60" r="1.2" fill="#222"/><circle cx="8.50" cy="3.60" r="1.2" fill="#222"/><circle cx="3.80" cy="7.90" r="1.2" fill="#222"/><circle cx="8.50" cy="7.90" r="1.2" fill="#222"/><circle cx="3.80" cy="12.20" r="1.2" fill="#222"/><circle cx="8.50" cy="12.20" r="1.2" fill="#222"/></svg>
</body></html>
